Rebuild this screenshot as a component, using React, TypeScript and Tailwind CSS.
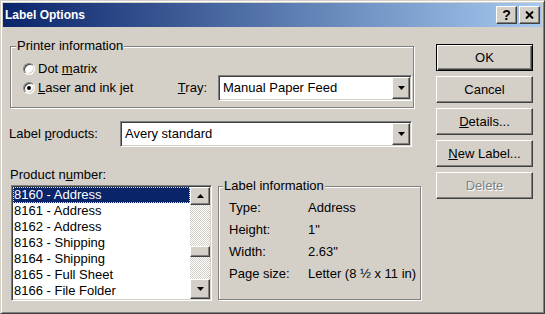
import React from "react";

const raised =
  "border border-t-white border-l-white border-r-[#404040] border-b-[#404040] shadow-[inset_-1px_-1px_0_#808080,inset_1px_1px_0_#d4d0c8]";
const sunken =
  "border border-t-[#808080] border-l-[#808080] border-r-white border-b-white shadow-[inset_1px_1px_0_#404040,inset_-1px_-1px_0_#d4d0c8]";
const etched =
  "border border-[#808080] shadow-[inset_1px_1px_0_#fff,1px_1px_0_#fff]";

function Arrow({ up = false }: { up?: boolean }) {
  return (
    <svg width="7" height="4" viewBox="0 0 7 4" className="block">
      {up ? (
        <polygon points="3.5,0 7,4 0,4" fill="#000" />
      ) : (
        <polygon points="0,0 7,0 3.5,4" fill="#000" />
      )}
    </svg>
  );
}

function Radio({ checked }: { checked?: boolean }) {
  return (
    <div className="w-[12px] h-[12px] rounded-full border border-t-[#808080] border-l-[#808080] border-r-white border-b-white shadow-[inset_1px_1px_0_#404040,inset_-1px_-1px_0_#d4d0c8] bg-white flex items-center justify-center shrink-0">
      {checked && <div className="w-[4px] h-[4px] rounded-full bg-black" />}
    </div>
  );
}

function Combo({ value, width }: { value: string; width: string }) {
  return (
    <div className={`${sunken} ${width} h-[26px] bg-white flex items-stretch p-[1px]`}>
      <div className="flex-1 flex items-center pl-[3px] leading-[16px]">{value}</div>
      <div className={`${raised} w-[18px] bg-[#d4d0c8] flex items-center justify-center`}>
        <Arrow />
      </div>
    </div>
  );
}

function Btn({
  children,
  def = false,
  disabled = false,
}: {
  children: React.ReactNode;
  def?: boolean;
  disabled?: boolean;
}) {
  if (def) {
    return (
      <div className="w-[97px] h-[27px] border border-black shadow-[inset_1px_1px_0_#fff,inset_-1px_-1px_0_#404040,inset_-2px_-2px_0_#808080] flex items-center justify-center leading-[16px]">
        {children}
      </div>
    );
  }
  return (
    <div
      className={`${raised} w-[97px] h-[27px] flex items-center justify-center leading-[16px] ${
        disabled ? "text-[#808080] [text-shadow:1px_1px_0_#fff]" : ""
      }`}
    >
      {children}
    </div>
  );
}

const items = [
  "8160 - Address",
  "8161 - Address",
  "8162 - Address",
  "8163 - Shipping",
  "8164 - Shipping",
  "8165 - Full Sheet",
  "8166 - File Folder",
];

export default function App() {
  return (
    <div className="w-[545px] h-[314px] bg-[#d4d0c8] border border-t-[#d4d0c8] border-l-[#d4d0c8] border-r-[#404040] border-b-[#404040] shadow-[inset_1px_1px_0_#fff,inset_-1px_-1px_0_#808080] p-[2px] font-['Liberation_Sans',Arial,sans-serif] text-[13px] text-black flex flex-col overflow-hidden">
      {/* Title bar */}
      <div className="h-[24px] shrink-0 bg-[linear-gradient(to_right,#0a246a,#a6caf0)] flex items-center pl-[2px] pr-[2px]">
        <div className="text-white font-bold text-[12px] leading-[16px] flex-1">Label Options</div>
        <div className="flex gap-[2px]">
          <div className={`${raised} bg-[#d4d0c8] w-[21px] h-[18px] flex items-center justify-center font-bold text-[14px] leading-[14px]`}>
            ?
          </div>
          <div className={`${raised} bg-[#d4d0c8] w-[21px] h-[18px] flex items-center justify-center`}>
            <svg width="9" height="8" viewBox="0 0 9 8">
              <path d="M1 0.5 L8 7.5 M8 0.5 L1 7.5" stroke="#000" strokeWidth="1.9" />
            </svg>
          </div>
        </div>
      </div>

      {/* Body */}
      <div className="flex flex-1 pl-[6px]">
        {/* Left column */}
        <div className="w-[413px] pt-[19px] flex flex-col">
          {/* Printer information */}
          <div className={`${etched} relative ml-[1px] w-[404px] h-[62px] pt-[15px] pr-[1px]`}>
            <span className="absolute left-[5px] top-[-9px] px-[1px] bg-[#d4d0c8] leading-[16px]">
              Printer information
            </span>
            <div className="h-[13px] flex items-center pl-[12px] gap-[3px]">
              <Radio />
              <span className="leading-[16px]">
                Dot <span className="underline">m</span>atrix
              </span>
            </div>
            <div className="h-[26px] flex items-center pl-[12px]">
              <Radio checked />
              <span className="leading-[16px] ml-[3px]">
                <span className="underline">L</span>aser and ink jet
              </span>
              <span className="ml-auto mr-[11px] leading-[16px]">
                <span className="underline">T</span>ray:
              </span>
              <Combo value="Manual Paper Feed" width="w-[194px]" />
            </div>
          </div>

          {/* Label products */}
          <div className="mt-[13px] flex items-center h-[26px]">
            <span className="w-[111px] leading-[16px]">
              Label <span className="underline">p</span>roducts:
            </span>
            <Combo value="Avery standard" width="w-[292px]" />
          </div>

          {/* Bottom row */}
          <div className="mt-[20px] flex">
            <div className="flex flex-col">
              <span className="ml-[1px] h-[16px] leading-[16px]">
                Product n<span className="underline">u</span>mber:
              </span>
              <div className={`${sunken} mt-[2px] ml-[2px] w-[201px] h-[116px] bg-white p-[1px] flex`}>
                <div className="flex-1 flex flex-col">
                  {items.map((it, i) => (
                    <div
                      key={it}
                      className={`h-[16px] leading-[14px] pl-[0px] whitespace-nowrap border ${
                        i === 0
                          ? "bg-[#0a246a] text-white border-dotted border-[#f3d9a6]"
                          : "border-transparent"
                      }`}
                    >
                      {it}
                    </div>
                  ))}
                </div>
                <div className="w-[20px] flex flex-col bg-[repeating-conic-gradient(#d4d0c8_0_25%,#ffffff_0_50%)] bg-[length:2px_2px]">
                  <div className={`${raised} bg-[#d4d0c8] h-[18px] flex items-center justify-center`}>
                    <Arrow up />
                  </div>
                  <div className="flex-1 flex flex-col">
                    <div className="h-[41px]" />
                    <div className={`${raised} bg-[#d4d0c8] h-[11px]`} />
                  </div>
                  <div className={`${raised} bg-[#d4d0c8] h-[20px] flex items-center justify-center`}>
                    <Arrow />
                  </div>
                </div>
              </div>
            </div>

            {/* Label information */}
            <div className={`${etched} relative ml-[6px] mt-[19px] w-[203px] h-[114px] pt-[10px] pl-[10px]`}>
              <span className="absolute left-[4px] top-[-9px] px-[1px] bg-[#d4d0c8] leading-[16px]">
                Label information
              </span>
              {[
                ["Type:", "Address"],
                ["Height:", '1"'],
                ["Width:", '2.63"'],
                ["Page size:", "Letter (8 \u00bd x 11 in)"],
              ].map(([k, v]) => (
                <div key={k} className="h-[22px] flex items-center leading-[16px] whitespace-nowrap">
                  <span className="w-[79px]">{k}</span>
                  <span>{v}</span>
                </div>
              ))}
            </div>
          </div>
        </div>

        {/* Right column */}
        <div className="ml-[14px] pt-[17px] flex flex-col gap-[5px]">
          <Btn def>OK</Btn>
          <Btn>Cancel</Btn>
          <Btn>
            <span>
              <span className="underline">D</span>etails...
            </span>
          </Btn>
          <Btn>
            <span>
              <span className="underline">N</span>ew Label...
            </span>
          </Btn>
          <Btn disabled>Delete</Btn>
        </div>
      </div>
    </div>
  );
}
